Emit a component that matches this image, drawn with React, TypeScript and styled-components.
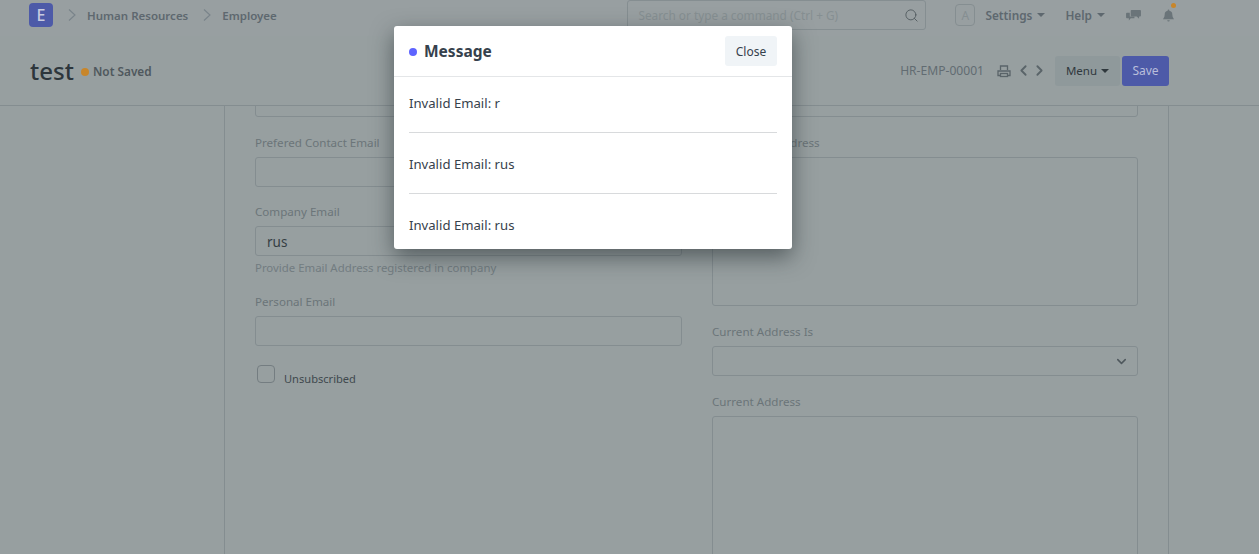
import React from "react";
import styled, { createGlobalStyle } from "styled-components";
import { ChevronDown, ChevronLeft, ChevronRight, Search } from "lucide-react";

const Global = createGlobalStyle`
  html, body { margin: 0; padding: 0; height: 100%; overflow: hidden; background: #979fa0; }
  * { box-sizing: border-box; }
  body { font-family: "Noto Sans", "Open Sans", sans-serif; }
`;

const Page = styled.div`
  position: relative;
  width: 1259px;
  height: 554px;
  overflow: hidden;
  background: #979fa0;
  display: flex;
  flex-direction: column;
`;

const Navbar = styled.header`
  height: 36px;
  flex: none;
  display: flex;
  align-items: center;
  padding: 0 85px 6px 29px;
  background: #989fa1;
  position: relative;
  z-index: 2;
`;
const Logo = styled.div`
  width: 24px;
  height: 24px;
  border-radius: 4px;
  background: #4d5aa8;
  color: #c7cbe0;
  font-size: 16px;
  font-weight: 500;
  display: flex;
  align-items: center;
  justify-content: center;
`;
const Crumb = styled.span`
  display: flex;
  align-items: center;
  font-size: 11.5px;
  font-weight: 600;
  color: #5e686f;
`;
const CrumbArrow = styled.svg`
  width: 8px;
  height: 12px;
  margin: 0 11px 0 15px;
  color: #79838a;
`;
const Spacer = styled.div`
  flex: 1;
`;
const SearchBox = styled.div`
  width: 299px;
  height: 30px;
  margin-right: 29px;
  border: 1px solid #858e91;
  border-radius: 3px;
  display: flex;
  align-items: center;
  justify-content: space-between;
  padding: 0 6px 0 10px;
  font-size: 11.8px;
  color: #868f92;
  svg { color: #4f585d; }
`;
const Avatar = styled.div`
  width: 20px;
  height: 22px;
  border: 1px solid #858e91;
  border-radius: 4px;
  font-size: 12px;
  color: #858e91;
  display: flex;
  align-items: center;
  justify-content: center;
  margin-right: 10px;
`;
const NavMenu = styled.span`
  display: flex;
  align-items: center;
  gap: 5px;
  font-size: 11.8px;
  font-weight: 600;
  color: #5e686f;
  margin-right: ${(p: { $gap: number }) => p.$gap}px;
`;
const Caret = styled.i`
  display: inline-block;
  width: 0;
  height: 0;
  border-left: 4px solid transparent;
  border-right: 4px solid transparent;
  border-top: 4px solid currentColor;
`;
const NavIcons = styled.div`
  display: flex;
  align-items: center;
  gap: 22px;
`;
const BellWrap = styled.span`
  position: relative;
  display: flex;
`;
const BellDot = styled.i`
  position: absolute;
  top: -6px;
  right: -2px;
  width: 5px;
  height: 5px;
  border-radius: 50%;
  background: #c8862b;
`;

const PageHead = styled.div`
  height: 70px;
  flex: none;
  display: flex;
  align-items: center;
  padding: 0 90px 0 30px;
  background: #979fa0;
  border-bottom: 1px solid #848d90;
  position: relative;
  z-index: 2;
`;
const Title = styled.h1`
  margin: 0;
  font-size: 24px;
  font-weight: 500;
  color: #2d363c;
  line-height: 30px;
  width: 43px;
`;
const StatusDot = styled.i`
  width: 8px;
  height: 8px;
  border-radius: 50%;
  background: #c8862b;
  margin: 2px 4px 0 8px;
`;
const Status = styled.span`
  font-size: 11.8px;
  font-weight: 600;
  color: #4f585d;
  margin-top: 1px;
`;
const DocName = styled.span`
  font-size: 12.1px;
  color: #626c72;
  margin-right: 13px;
`;
const HeadIcons = styled.div`
  display: flex;
  align-items: center;
  color: #5a6469;
  margin-right: 7px;
  svg:first-child { margin-right: 4px; }
  svg:last-child { margin-left: -1px; }
`;
const MenuButton = styled.div`
  width: 65px;
  height: 30px;
  border-radius: 3px;
  background: #8f999b;
  font-size: 11.5px;
  color: #2f383d;
  display: flex;
  align-items: center;
  justify-content: center;
  gap: 4px;
  margin-right: 2px;
`;
const SaveButton = styled.div`
  width: 47px;
  height: 30px;
  border-radius: 3px;
  background: #4d5aa8;
  color: #b9bedb;
  font-size: 12px;
  display: flex;
  align-items: center;
  justify-content: center;
`;

const Sheet = styled.main`
  flex: 1;
  margin: 0 90px 0 224px;
  padding: 0 30px;
  border-left: 1px solid #848d90;
  border-right: 1px solid #848d90;
  overflow: hidden;
`;
const Columns = styled.div`
  display: grid;
  grid-template-columns: 427px 426px;
  column-gap: 30px;
  margin-top: -19px;
`;
const Column = styled.div`
  display: flex;
  flex-direction: column;
`;
const Field = styled.div`
  margin-bottom: ${(p: { $gap?: number }) => p.$gap ?? 17}px;
`;
const Label = styled.div`
  font-size: 11.6px;
  line-height: 18px;
  color: #6b7579;
  margin-bottom: 5px;
`;
const Input = styled.div`
  height: 30px;
  border: 1px solid #848d90;
  border-radius: 3px;
  padding: 0 11px;
  font-size: 13.5px;
  line-height: 30px;
  color: #353e44;
`;
const Area = styled.div`
  height: ${(p: { $h: number }) => p.$h}px;
  border: 1px solid #848d90;
  border-radius: 3px;
`;
const Select = styled(Input)`
  display: flex;
  align-items: center;
  justify-content: flex-end;
  padding: 1px 8px 0;
  color: #4f585d;
`;
const Help = styled.div`
  font-size: 11.4px;
  line-height: 16px;
  color: #727c80;
  margin-top: 4px;
`;
const CheckRow = styled.div`
  display: flex;
  align-items: flex-start;
  padding-left: 2px;
  margin-top: 2px;
`;
const CheckBox = styled.div`
  width: 18px;
  height: 18px;
  border: 1px solid #747d81;
  border-radius: 4px;
  margin-right: 9px;
`;
const CheckLabel = styled.span`
  font-size: 11.1px;
  color: #40494e;
  margin-top: 6px;
`;

const Modal = styled.section`
  position: absolute;
  z-index: 5;
  left: 394px;
  top: 26px;
  width: 398px;
  height: 223px;
  background: #fff;
  border-radius: 3px;
  box-shadow: 0 8px 22px rgba(30, 38, 42, 0.55);
  display: flex;
  flex-direction: column;
`;
const ModalHead = styled.div`
  height: 51px;
  flex: none;
  display: flex;
  align-items: center;
  padding: 0 15px;
  border-bottom: 1px solid #e4e6e8;
`;
const ModalDot = styled.i`
  width: 8px;
  height: 8px;
  border-radius: 50%;
  background: #5e64ff;
  margin: 2px 7px 0 0;
`;
const ModalTitle = styled.h4`
  margin: 0;
  font-size: 15.5px;
  font-weight: 700;
  color: #36414c;
  flex: 1;
`;
const CloseButton = styled.button`
  width: 52px;
  height: 30px;
  border: 0;
  border-radius: 3px;
  background: #f0f4f7;
  color: #36414c;
  font: 12px "Noto Sans", sans-serif;
  padding: 0;
`;
const ModalBody = styled.div`
  padding: 0 15px;
`;
const Message = styled.div`
  height: 61px;
  padding-top: 21px;
  font-size: 13.15px;
  line-height: 20px;
  color: #36414c;
  border-bottom: ${(p: { $last?: boolean }) => (p.$last ? "0" : "1px solid #d8dadc")};
  &:first-child { height: 56px; padding-top: 16px; }
`;

const PrinterIcon = () => (
  <svg width="14" height="14" viewBox="0 0 14 14" fill="none" stroke="currentColor" strokeWidth="1.3">
    <path d="M3.500 6V2h7v4" />
    <path d="M1 7h12v4.500H1z" />
    <rect x="3.500" y="9.500" width="7" height="3" fill="#979fa0" />
  </svg>
);
const ChatIcon = () => (
  <svg width="15" height="13" viewBox="0 0 16 14" fill="#6a7479">
    <path d="M6 1h9a1 1 0 0 1 1 1v5a1 1 0 0 1-1 1h-1v2.500L11.500 8H6a1 1 0 0 1-1-1V2a1 1 0 0 1 1-1z" />
    <path d="M1 4h3v4h5v2H5l-2 2.500V10H1a1 1 0 0 1-1-1V5a1 1 0 0 1 1-1z" />
  </svg>
);
const BellIcon = () => (
  <svg width="11" height="13" viewBox="0 0 13 15" fill="#6a7479">
    <path d="M6.500 0.500a1 1 0 0 1 1 1v.4A4.300 4.300 0 0 1 11 6.200c0 3.600 2 4.800 2 5.800H0c0-1 2-2.200 2-5.800a4.300 4.300 0 0 1 3.500-4.300v-.4a1 1 0 0 1 1-1z" />
    <path d="M5 13h3a1.500 1.500 0 0 1-3 0z" />
  </svg>
);
const Arrow = () => (
  <CrumbArrow viewBox="0 0 8 12" fill="none" stroke="currentColor" strokeWidth="1.1">
    <path d="M1 0.500 7 6 1 11.500" />
  </CrumbArrow>
);

export default function App() {
  return (
    <Page>
      <Global />
      <Navbar>
        <Logo>E</Logo>
        <Crumb>
          <Arrow />
          Human Resources
        </Crumb>
        <Crumb>
          <Arrow />
          Employee
        </Crumb>
        <Spacer />
        <SearchBox>
          Search or type a command (Ctrl + G)
          <Search size={15} strokeWidth={1.4} />
        </SearchBox>
        <Avatar>A</Avatar>
        <NavMenu $gap={20}>
          Settings <Caret />
        </NavMenu>
        <NavMenu $gap={21}>
          Help <Caret />
        </NavMenu>
        <NavIcons>
          <ChatIcon />
          <BellWrap>
            <BellIcon />
            <BellDot />
          </BellWrap>
        </NavIcons>
      </Navbar>
      <PageHead>
        <Title>test</Title>
        <StatusDot />
        <Status>Not Saved</Status>
        <Spacer />
        <DocName>HR-EMP-00001</DocName>
        <HeadIcons>
          <PrinterIcon />
          <ChevronLeft size={17} strokeWidth={2.6} />
          <ChevronRight size={17} strokeWidth={2.6} />
        </HeadIcons>
        <MenuButton>
          Menu <Caret />
        </MenuButton>
        <SaveButton>Save</SaveButton>
      </PageHead>
      <Sheet>
        <Columns>
          <Column>
            <Field>
              <Input />
            </Field>
            <Field $gap={16}>
              <Label>Prefered Contact Email</Label>
              <Input />
            </Field>
            <Field>
              <Label>Company Email</Label>
              <Input>rus</Input>
              <Help>Provide Email Address registered in company</Help>
            </Field>
            <Field>
              <Label>Personal Email</Label>
              <Input />
            </Field>
            <CheckRow>
              <CheckBox />
              <CheckLabel>Unsubscribed</CheckLabel>
            </CheckRow>
          </Column>
          <Column>
            <Field>
              <Input />
            </Field>
            <Field>
              <Label>Permanent Address</Label>
              <Area $h={149} />
            </Field>
            <Field>
              <Label>Current Address Is</Label>
              <Select>
                <ChevronDown size={15} strokeWidth={2.4} />
              </Select>
            </Field>
            <Field>
              <Label>Current Address</Label>
              <Area $h={150} />
            </Field>
          </Column>
        </Columns>
      </Sheet>
      <Modal>
        <ModalHead>
          <ModalDot />
          <ModalTitle>Message</ModalTitle>
          <CloseButton>Close</CloseButton>
        </ModalHead>
        <ModalBody>
          <Message>Invalid Email: r</Message>
          <Message>Invalid Email: rus</Message>
          <Message $last>Invalid Email: rus</Message>
        </ModalBody>
      </Modal>
    </Page>
  );
}
